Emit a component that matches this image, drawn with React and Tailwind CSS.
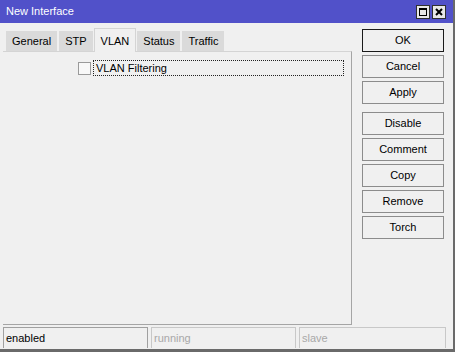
import React from 'react';

const font = { fontFamily: '"Liberation Sans", Arial, sans-serif' };

const tabs = ['General', 'STP', 'VLAN', 'Status', 'Traffic'];
const buttons = [
    ['OK', 'Cancel', 'Apply'],
    ['Disable', 'Comment', 'Copy', 'Remove', 'Torch'],
];

function Tab({ label, active }) {
    if (active) {
        return (
            <div className="h-[24px] -mb-[1px] px-[6px] flex items-start pt-[4px] bg-[#f0f0f0] border border-b-0 border-[#d4d4d4] relative z-10">
                {label}
            </div>
        );
    }
    return (
        <div className="h-[21px] px-[6px] flex items-center bg-[#dadada] border border-[#f0f0f0] border-b-0">
            {label}
        </div>
    );
}

function Btn({ label, primary }) {
    return (
        <div className={`h-[23px] w-[82px] flex items-center justify-center bg-[#f0f0f0] border ${primary ? 'border-[#1a1a1a]' : 'border-[#8c8c8c]'}`}>
            {label}
        </div>
    );
}

export default function App() {
    return (
        <div className="w-[455px] h-[352px] bg-[#f0f0f0] flex flex-col text-[11px] text-black border-r-[2px] border-b-[3px] border-[#6a6a6a] overflow-hidden" style={font}>
            {/* title bar */}
            <div className="h-[23px] bg-[#5151c9] flex items-center justify-between pl-[6px] pr-[7px] shrink-0">
                <span className="text-white text-[11px]">New Interface</span>
                <div className="flex gap-[2px]">
                    <div className="w-[14px] h-[14px] bg-[#e8e8e8] border border-[#303030] flex items-center justify-center">
                        <div className="w-[8px] h-[8px] border border-black border-t-2" />
                    </div>
                    <div className="w-[14px] h-[14px] bg-[#e8e8e8] border border-[#303030] flex items-center justify-center">
                        <svg width="8" height="8" viewBox="0 0 8 8">
                            <path d="M1 1 L7 7 M7 1 L1 7" stroke="black" strokeWidth="2" />
                        </svg>
                    </div>
                </div>
            </div>

            <div className="flex flex-1 min-h-0">
                {/* left: tabs + panel */}
                <div className="flex flex-col ml-[3px] w-[349px] pt-[4px]">
                    <div className="flex items-end pl-[2px] h-[24px]">
                        {tabs.map((t) => (
                            <Tab key={t} label={t} active={t === 'VLAN'} />
                        ))}
                    </div>
                    <div className="flex-1 border-r border-b border-[#a5a5a5] border-t border-t-[#d4d4d4] pt-[8px] mb-[2px]">
                        <div className="flex items-center ml-[75px]">
                            <div className="w-[13px] h-[13px] border border-[#9a9a9a] bg-[#f8f8f8]" />
                            <div className="ml-[2px] w-[251px] h-[16px] flex items-center pl-[2px] border border-dotted border-[#222]">
                                VLAN Filtering
                            </div>
                        </div>
                    </div>
                </div>

                {/* right: buttons */}
                <div className="flex flex-col ml-[10px] pt-[6px] gap-[8px]">
                    {buttons.map((group, i) => (
                        <div key={i} className="flex flex-col gap-[3px]">
                            {group.map((b) => (
                                <Btn key={b} label={b} primary={b === 'OK'} />
                            ))}
                        </div>
                    ))}
                </div>
            </div>

            {/* status bar */}
            <div className="flex gap-[3px] px-[3px] pb-[1px] h-[22px] shrink-0">
                <div className="w-[145px] border border-[#a0a0a0] border-b-0 flex items-center pl-[2px]">enabled</div>
                <div className="w-[145px] border border-[#c8c8c8] border-b-0 flex items-center pl-[2px] text-[#a8a8a8]">running</div>
                <div className="w-[147px] border border-[#c8c8c8] border-b-0 flex items-center pl-[2px] text-[#a8a8a8]">slave</div>
            </div>
        </div>
    );
}
